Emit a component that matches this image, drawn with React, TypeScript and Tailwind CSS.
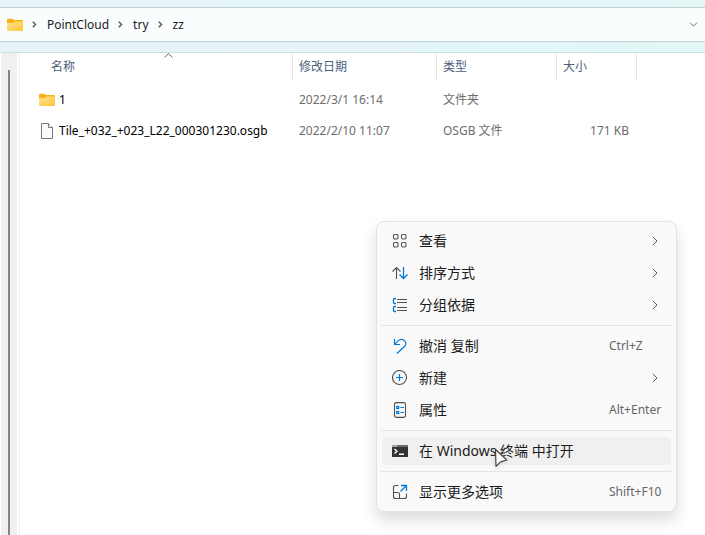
import type { ReactNode } from "react";

const crumbs = ["PointCloud", "try", "zz"];

const files = [
  { name: "1", date: "2022/3/1 16:14", type: "文件夹", size: "", folder: true },
  { name: "Tile_+032_+023_L22_000301230.osgb", date: "2022/2/10 11:07", type: "OSGB 文件", size: "171 KB", folder: false },
];

type MenuItem = {
  label: string;
  icon: ReactNode;
  shortcut?: string;
  submenu?: boolean;
  active?: boolean;
};

function Svg({ children }: { children: ReactNode }) {
  return (
    <svg className="size-4 shrink-0" viewBox="0 0 16 16" fill="none" stroke="#4f4f4f" strokeWidth="1.1" aria-hidden="true">
      {children}
    </svg>
  );
}

function FolderIcon() {
  return (
    <svg className="size-4 shrink-0" viewBox="0 0 16 16" aria-hidden="true">
      <defs>
        <linearGradient id="folder" x1="0" y1="0" x2="1" y2="1">
          <stop offset="0" stopColor="#ffe49a" />
          <stop offset="1" stopColor="#fdc52f" />
        </linearGradient>
      </defs>
      <path d="M0 3a1.3 1.3 0 0 1 1.3-1.3h4.2L7.3 3h7.2A1.4 1.4 0 0 1 16 4.4V7H0z" fill="#f5b216" />
      <path d="M0 6h6l1.7-1.500H16v8.3a1.300 1.300 0 0 1-1.300 1.300H1.300A1.300 1.300 0 0 1 0 12.800z" fill="url(#folder)" />
    </svg>
  );
}

function FileIcon() {
  return (
    <svg className="size-4 shrink-0" viewBox="0 0 16 16" fill="#fafafa" stroke="#777" aria-hidden="true">
      <path d="M2.5.5h7l4 4v11h-11z" />
      <path d="M9.5.5v4h4" />
    </svg>
  );
}

function Chevron({ className }: { className: string }) {
  return (
    <svg className={className} viewBox="0 0 6 10" fill="none" stroke="#5c5c5c" aria-hidden="true">
      <path d="M.8.8 5 5 .8 9.2" />
    </svg>
  );
}

const groups: MenuItem[][] = [
  [
    {
      label: "查看",
      submenu: true,
      icon: (
        <Svg>
          <rect x="1.5" y="1.5" width="4.5" height="4.5" rx="1.2" />
          <rect x="9.5" y="1.5" width="4.5" height="4.5" rx="1.2" />
          <rect x="1.5" y="9.5" width="4.5" height="4.5" rx="1.2" />
          <rect x="9.5" y="9.5" width="4.5" height="4.5" rx="1.2" />
        </Svg>
      ),
    },
    {
      label: "排序方式",
      submenu: true,
      icon: (
        <Svg>
          <path d="M4.500 14V2.500M.5 6.500l4-4 4 4" />
          <path d="M11.500 2v11.500M7.500 9.500l4 4 4-4" stroke="#0078d4" strokeWidth="1.300" />
        </Svg>
      ),
    },
    {
      label: "分组依据",
      submenu: true,
      icon: (
        <Svg>
          <path d="M5 2.500h10M5 5.500h10M5 10.500h10M5 13.500h10" />
          <path
            d="M4 1.500H2.500a1 1 0 0 0-1 1v3a1 1 0 0 0 1 1H4M4 9.500H2.500a1 1 0 0 0-1 1v3a1 1 0 0 0 1 1H4"
            stroke="#0078d4"
            strokeWidth="1.300"
          />
        </Svg>
      ),
    },
  ],
  [
    {
      label: "撤消 复制",
      shortcut: "Ctrl+Z",
      icon: (
        <Svg>
          <path
            d="M2.500 1v5.500H8M2.700 6.300l3.600-3.600a4.300 4.300 0 0 1 6.500.2 4.300 4.300 0 0 1-.3 5.600L5 15.500"
            stroke="#0078d4"
            strokeWidth="1.200"
          />
        </Svg>
      ),
    },
    {
      label: "新建",
      submenu: true,
      icon: (
        <Svg>
          <circle cx="7.500" cy="7.500" r="7" />
          <path d="M7.500 4v7M4 7.500h7" stroke="#0078d4" strokeWidth="1.200" />
        </Svg>
      ),
    },
    {
      label: "属性",
      shortcut: "Alt+Enter",
      icon: (
        <Svg>
          <rect x="2.500" y=".6" width="11" height="14.800" rx="1.800" />
          <g stroke="#0078d4" strokeWidth="1.200">
            <path d="M8.500 5.500H12M8.500 10.500H12" />
            <rect x="4.700" y="4.500" width="2" height="2" />
            <rect x="4.700" y="9.500" width="2" height="2" />
          </g>
        </Svg>
      ),
    },
  ],
  [
    {
      label: "在 Windows 终端 中打开",
      active: true,
      icon: (
        <Svg>
          <path d="M0 2h16v12H0z" fill="#343434" stroke="none" />
          <path d="M0 2h16v2H0z" fill="#6b6b6b" stroke="none" />
          <path d="M0 2h5v2H0z" fill="#a8a8a8" stroke="none" />
          <path d="m2.500 6 2.500 2.300-2.500 2.300M7 11.200h5" stroke="#fff" strokeWidth="1.400" />
        </Svg>
      ),
    },
  ],
  [
    {
      label: "显示更多选项",
      shortcut: "Shift+F10",
      icon: (
        <Svg>
          <path d="M6.500 1.500h-3a2 2 0 0 0-2 2v9a2 2 0 0 0 2 2h9a2 2 0 0 0 2-2v-3M1.500 8.500h4a2 2 0 0 1 2 2v4" />
          <path d="M9 1.500h5.500V7M14.500 1.500l-6 6" stroke="#0078d4" strokeWidth="1.300" />
        </Svg>
      ),
    },
  ],
];

function ContextMenu() {
  return (
    <div
      role="menu"
      className="absolute top-[221px] left-[376px] w-[301px] rounded-lg border border-[#e3e3e3] bg-[#f9f9f9] py-[3px] shadow-[0_8px_16px_rgba(0,0,0,0.14)]"
    >
      {groups.map((items, index) => (
        <div key={items[0].label} role="group">
          {index > 0 && <hr className="mx-1 my-1 border-[#e5e5e5]" />}
          {items.map((item) => (
            <div key={item.label} className="px-[5px] py-0.5">
              <button
                type="button"
                role="menuitem"
                className={`flex h-7 w-full items-center rounded pl-[10px] text-left text-sm text-[#1b1b1b] ${item.active ? "bg-[#f0f0f0]" : ""}`}
              >
                {item.icon}
                <span className="ml-[11px] flex-1 whitespace-nowrap">{item.label}</span>
                {item.shortcut && <span className="w-[62px] text-xs text-[#666]">{item.shortcut}</span>}
                {item.submenu && <Chevron className="mr-[13px] h-[10px] w-[6px]" />}
              </button>
            </div>
          ))}
        </div>
      ))}
    </div>
  );
}

function HeaderCell({ children, className }: { children: ReactNode; className: string }) {
  return (
    <th scope="col" className="p-0 pb-1 text-left font-normal text-[#4c607a]">
      <div className={`flex h-[27px] items-center border-r border-[#e5e5e5] ${className}`}>{children}</div>
    </th>
  );
}

export default function App() {
  return (
    <div className="relative flex min-h-screen flex-col overflow-hidden bg-white font-['Noto_Sans','Noto_Sans_CJK_SC',sans-serif] text-xs">
      <header className="border-b border-[#cbdfe0] bg-linear-to-r from-[#e7f3f8] to-[#e3f7f7] pt-[7px] pb-[10px]">
        <nav aria-label="路径" className="flex h-[35px] items-center border-y border-[#bfd0d3] bg-[#f9fdfe] pr-[6px] pl-[7px]">
          <FolderIcon />
          {crumbs.map((crumb) => (
            <div key={crumb} className="flex items-center">
              <svg className="mr-[10px] ml-[9px] h-[7px] w-[5px]" viewBox="0 0 5 7" fill="none" stroke="#555" strokeWidth="1.4" aria-hidden="true">
                <path d="m.8.8 2.700 2.700L.8 6.200" />
              </svg>
              <a href="#" className="text-[#1b1b1b]">
                {crumb}
              </a>
            </div>
          ))}
          <button type="button" aria-label="展开" className="ml-auto flex size-3 items-center justify-center">
            <Chevron className="h-[9px] w-[5px] rotate-90" />
          </button>
        </nav>
      </header>

      <main className="flex flex-1">
        <div className="ml-px w-4 bg-[#f0f0f0] pt-[17px] pl-[7px]">
          <div className="h-full w-0.5 bg-[#858585]" />
        </div>
        <div className="ml-0.5 flex-1 border-l border-[#f0f0f0]">
          <table className="w-[617px] table-fixed border-collapse text-[#6d6d6d]">
            <colgroup>
              <col />
              <col className="w-36" />
              <col className="w-[120px]" />
              <col className="w-20" />
            </colgroup>
            <thead>
              <tr>
                <HeaderCell className="relative pl-[31px]">
                  名称
                  <svg className="absolute top-0 left-36 h-[5px] w-[9px]" viewBox="0 0 9 5" fill="none" stroke="#666" aria-hidden="true">
                    <path d="m.5 4.5 4-4 4 4" />
                  </svg>
                </HeaderCell>
                <HeaderCell className="pl-[6px]">修改日期</HeaderCell>
                <HeaderCell className="pl-[6px]">类型</HeaderCell>
                <HeaderCell className="pl-[6px]">大小</HeaderCell>
              </tr>
            </thead>
            <tbody>
              {files.map((file) => (
                <tr key={file.name} className="h-[31px] whitespace-nowrap">
                  <td className="p-0 pl-[19px] text-black">
                    <div className="flex items-center gap-1">
                      {file.folder ? <FolderIcon /> : <FileIcon />}
                      {file.name}
                    </div>
                  </td>
                  <td className="p-0 pl-[6px]">{file.date}</td>
                  <td className="p-0 pl-[6px]">{file.type}</td>
                  <td className="p-0 pr-2 text-right">{file.size}</td>
                </tr>
              ))}
            </tbody>
          </table>
        </div>
      </main>

      <ContextMenu />

      <svg
        className="pointer-events-none absolute top-[448px] left-[494px] h-5 w-4 drop-shadow-sm"
        viewBox="0 0 16 20"
        fill="#fff"
        stroke="#444"
        strokeWidth="1.2"
        strokeLinejoin="round"
        aria-hidden="true"
      >
        <path d="M1.500 1.500 2 18.300l4.500-4.500 6.300-1.800z" />
      </svg>
    </div>
  );
}
